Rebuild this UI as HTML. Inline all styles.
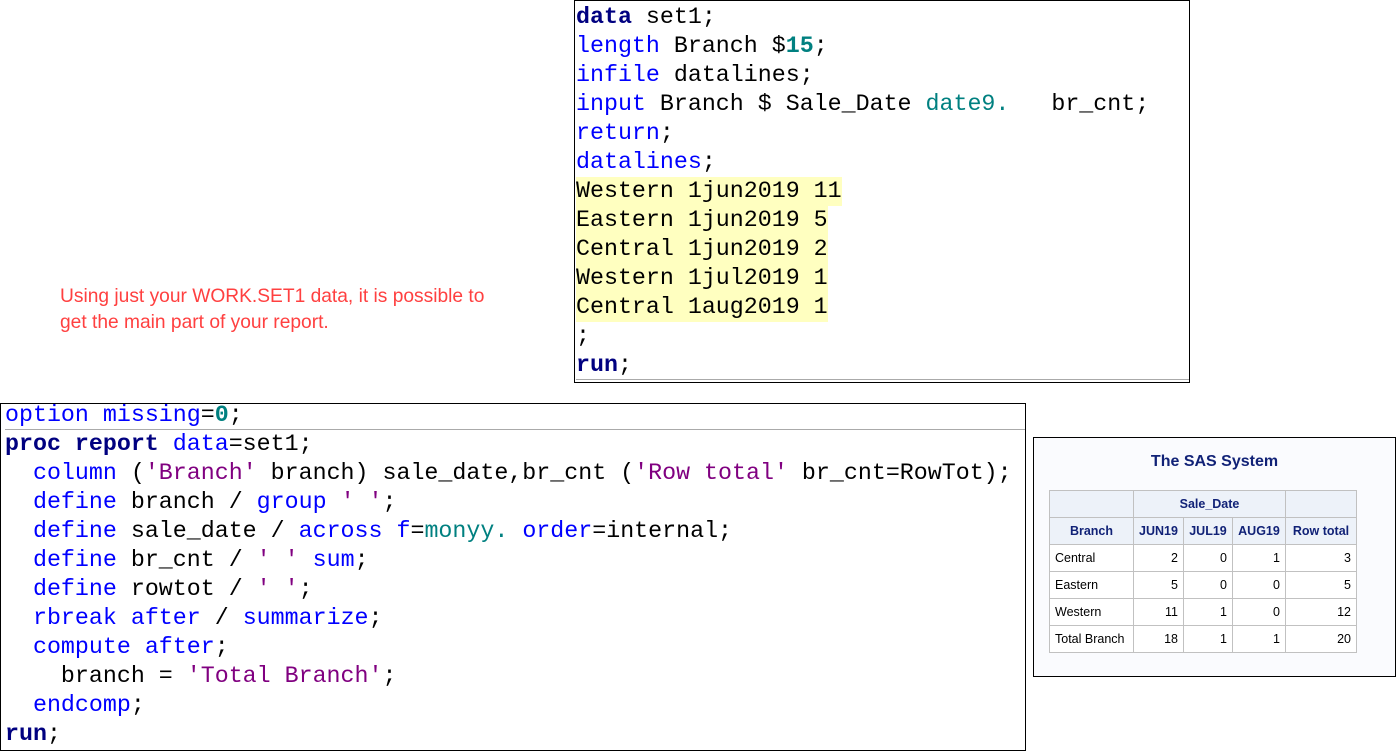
<!DOCTYPE html>
<html><head><meta charset="utf-8"><style>
body{margin:0;width:1396px;height:751px;background:#fff;position:relative;overflow:hidden}
.code{position:absolute;border:1px solid #000;font-family:"Liberation Mono",monospace;font-size:23.3px;line-height:29px;color:#000;background:#fff;box-sizing:border-box;overflow:hidden}
.code div{height:29px;white-space:pre}
.k{color:#0000ff}.b{color:#000080;font-weight:bold}.n{color:#008080;font-weight:bold}.f{color:#008080}.s{color:#800080}
.hl{background:#ffffc0;display:inline-block}
.note{position:absolute;left:60px;top:284px;font-family:"Liberation Sans",sans-serif;font-size:19.2px;line-height:26px;color:#ff4040}
.out{position:absolute;left:1033px;top:437px;width:361px;height:238px;border:1px solid #000;background:#fafbfe;font-family:"Liberation Sans",sans-serif}
.out h1{margin:0;position:absolute;top:15px;left:0;width:100%;text-align:center;font-size:16px;color:#112277;font-weight:bold}
table{position:absolute;left:15px;top:52px;border-collapse:collapse;font-size:12.5px}
td,th{border:1px solid #c1c1c1;height:26px;padding:0 5px;background:#fff}
th{background:#edf2f9;color:#112277;font-weight:bold}
td{text-align:right}
td.l{text-align:left}
</style></head><body>
<div class="code" style="left:574px;top:0;width:616px;height:383px;padding:2px 0 0 1px"><div><span class="b">data</span> set1;</div><div><span class="k">length</span> Branch $<span class="n">15</span>;</div><div><span class="k">infile</span> datalines;</div><div><span class="k">input</span> Branch $ Sale_Date <span class="f">date9.</span>   br_cnt;</div><div><span class="k">return</span>;</div><div><span class="k">datalines</span>;</div><div><span class="hl">Western 1jun2019 11</span></div><div><span class="hl">Eastern 1jun2019 5</span></div><div><span class="hl">Central 1jun2019 2</span></div><div><span class="hl">Western 1jul2019 1</span></div><div><span class="hl">Central 1aug2019 1</span></div><div>;</div><div style="border-bottom:1px solid #aaa;height:28px"><span class="b">run</span>;</div></div>
<div class="note">Using just your WORK.SET1 data, it is possible to<br>get the main part of your report.</div>
<div class="code" style="left:0;top:403px;width:1026px;height:348px;padding:0 0 0 4px"><div style="border-bottom:1px solid #aaa;height:25px;line-height:23px"><span class="k">option</span> <span class="k">missing</span>=<span class="n">0</span>;</div><div><span class="b">proc</span> <span class="b">report</span> <span class="k">data</span>=set1;</div><div>  <span class="k">column</span> (<span class="s">'Branch'</span> branch) sale_date,br_cnt (<span class="s">'Row total'</span> br_cnt=RowTot);</div><div>  <span class="k">define</span> branch / <span class="k">group</span> <span class="s">' '</span>;</div><div>  <span class="k">define</span> sale_date / <span class="k">across</span> <span class="k">f</span>=<span class="f">monyy.</span> <span class="k">order</span>=internal;</div><div>  <span class="k">define</span> br_cnt / <span class="s">' '</span> <span class="k">sum</span>;</div><div>  <span class="k">define</span> rowtot / <span class="s">' '</span>;</div><div>  <span class="k">rbreak</span> <span class="k">after</span> / <span class="k">summarize</span>;</div><div>  <span class="k">compute</span> <span class="k">after</span>;</div><div>    branch = <span class="s">'Total Branch'</span>;</div><div>  <span class="k">endcomp</span>;</div><div><span class="b">run</span>;</div></div>
<div class="out"><h1>The SAS System</h1>
<table>
<tr><th style="width:73px"></th><th colspan="3">Sale_Date</th><th></th></tr>
<tr><th>Branch</th><th style="width:39px">JUN19</th><th style="width:38px">JUL19</th><th style="width:42px">AUG19</th><th style="width:60px">Row total</th></tr>
<tr><td class="l">Central</td><td>2</td><td>0</td><td>1</td><td>3</td></tr>
<tr><td class="l">Eastern</td><td>5</td><td>0</td><td>0</td><td>5</td></tr>
<tr><td class="l">Western</td><td>11</td><td>1</td><td>0</td><td>12</td></tr>
<tr><td class="l">Total Branch</td><td>18</td><td>1</td><td>1</td><td>20</td></tr>
</table></div>
</body></html>
